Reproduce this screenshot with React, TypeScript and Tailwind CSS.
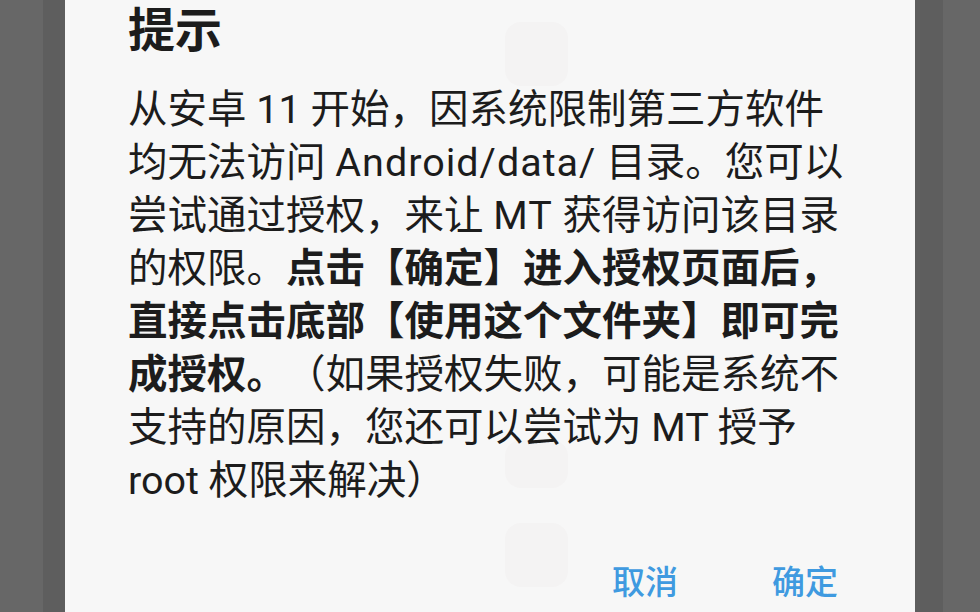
import React from "react";

const font = { fontFamily: '"Roboto", "Noto Sans CJK SC", sans-serif' };

const App = () => {
  return (
    <div className="flex w-[980px] h-[612px] overflow-hidden" style={font}>
      {/* left dim backdrop */}
      <div className="w-[43px] h-full bg-[#676767]" />
      <div className="w-[22px] h-full bg-[#5e5e5e]" />

      {/* dialog */}
      <div className="relative w-[850px] h-full bg-[#f7f7f7] flex flex-col pl-[63px] text-[#1c1c1c]">
        {/* ghost icons from the list behind */}
        <div className="absolute left-[440px] top-[22px] w-[63px] h-[64px] rounded-2xl bg-[#f4f3f3]" />
        <div className="absolute left-[440px] top-[440px] w-[63px] h-[48px] rounded-2xl bg-[#f4f3f3]" />
        <div className="absolute left-[440px] top-[523px] w-[63px] h-[64px] rounded-2xl bg-[#f4f3f3]" />

        <div className="relative mt-[2px] h-[57px] leading-[57px] text-[47px] font-bold">提示</div>

        <div className="relative mt-[24px] text-[39.5px] leading-[53px] whitespace-nowrap [text-spacing-trim:space-all]">
          <div>从安卓 11 开始，因系统限制第三方软件</div>
          <div>
            均无法访问 <span className="tracking-[1px]">Android/data/</span> 目录。您可以
          </div>
          <div>
            尝试通过授权，来让 <span className="tracking-[1px]">MT</span> 获得访问该目录
          </div>
          <div>
            的权限。<span className="font-bold">点击【确定】进入授权页面后，</span>
          </div>
          <div className="font-bold">直接点击底部【使用这个文件夹】即可完</div>
          <div>
            <span className="font-bold">成授权。</span>（如果授权失败，可能是系统不
          </div>
          <div>支持的原因，您还可以尝试为 MT 授予</div>
          <div>root 权限来解决）</div>
        </div>

        <div className="relative mt-auto mb-[9px] flex justify-end gap-[94px] pr-[77px] text-[33px] leading-[40px] font-medium text-[#3f9ae0]">
          <span>取消</span>
          <span>确定</span>
        </div>
      </div>

      {/* right dim backdrop */}
      <div className="w-[28px] h-full bg-[#5e5e5e]" />
      <div className="w-[37px] h-full bg-[#676767]" />
    </div>
  );
};

export default App;
